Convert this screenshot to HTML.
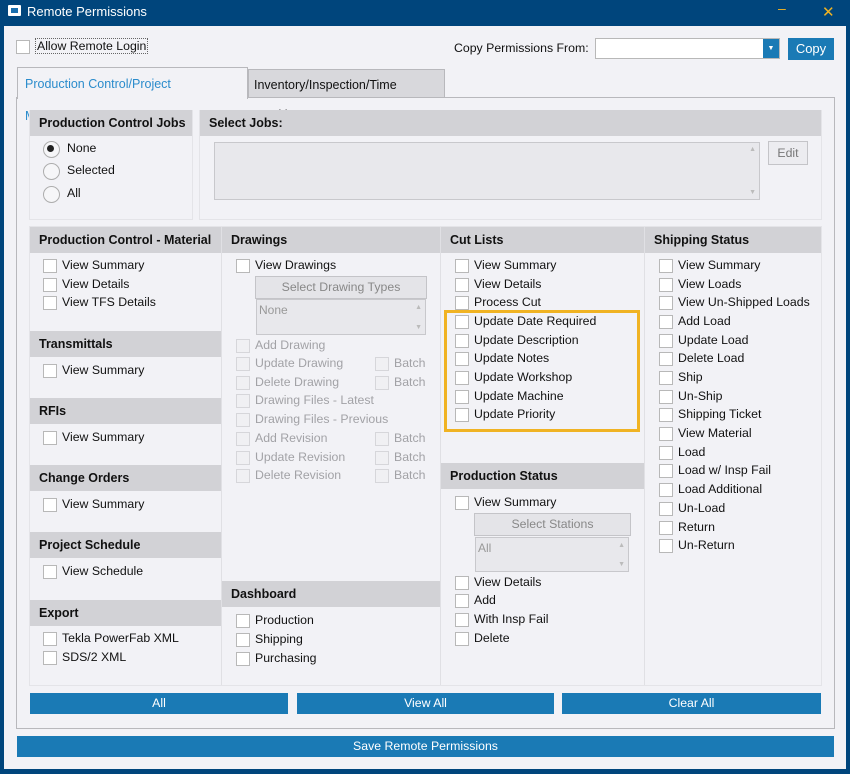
<!DOCTYPE html>
<html><head><meta charset="utf-8"><style>
*{box-sizing:border-box;margin:0;padding:0}
body{width:850px;height:774px;overflow:hidden;background:#00457c;font-family:"Liberation Sans",sans-serif;font-size:12px;color:#111;position:relative}
.a{position:absolute}
#win{left:4px;top:26px;width:842px;height:743px;background:#f2f2f6}
.hd{position:absolute;background:#d2d2d6;font-weight:bold;font-size:12.5px;line-height:26px;padding-left:9px;height:26px;color:#111}
.grp{position:absolute;background:#f2f2f6;border:1px solid #e4e4e8}
.c{position:absolute;height:16px;line-height:15px;padding-left:19px;white-space:nowrap;font-size:12.3px}
.c::before{content:"";position:absolute;left:0;top:1px;width:14px;height:14px;background:#fff;border:1px solid #b8b8b8;box-sizing:border-box}
.d{color:#a2a2a6}
.d::before{background:#f0f0f3;border-color:#d6d6da}
.r{position:absolute;height:16px;line-height:15px;padding-left:24px;font-size:12.3px}
.r::before{content:"";position:absolute;left:0;top:0;width:15px;height:15px;border:1px solid #adadad;border-radius:50%;background:#f6f6f8}
.btn{position:absolute;background:#1a7ab5;color:#fff;text-align:center;font-size:12.3px;line-height:21px;height:21px}
.gb{position:absolute;background:#e4e4e8;border:1px solid #c4c4c8;color:#888;text-align:center;font-size:12.3px}
.lb{position:absolute;background:#e8e8ec;border:1px solid #c8c8cc;color:#999;font-size:12px;padding:3px 2px}
.sc{position:absolute;right:3px;font-size:7px;color:#bbb}
</style></head><body>
<div class="a" style="left:8px;top:5px;width:13px;height:11px;background:#fff;border-radius:1px"></div>
<div class="a" style="left:11px;top:8px;width:7px;height:5px;background:#1a6fae"></div>
<div class="a" style="left:27px;top:4px;color:#fff;font-size:13px">Remote Permissions</div>
<div class="a" style="left:778px;top:0px;color:#f0b323;font-size:14px">–</div>
<div class="a" style="left:822px;top:3px;color:#f0b323;font-size:15px">✕</div>
<div id="win" class="a"></div>

<div class="c" style="left:16px;top:39px;padding-left:20px"><span style="outline:1px dotted #666;padding:0 1px">Allow Remote Login</span></div>
<div class="a" style="left:454px;top:41px;font-size:12.3px">Copy Permissions From:</div>
<div class="a" style="left:595px;top:38px;width:185px;height:21px;background:#fff;border:1px solid #b8b8b8"></div>
<div class="a" style="left:763px;top:39px;width:16px;height:19px;background:#1a7ab5;color:#fff;font-size:7px;text-align:center;line-height:19px">▼</div>
<div class="btn" style="left:788px;top:38px;width:46px;height:22px;line-height:22px;font-size:13px">Copy</div>

<div class="a" style="left:16px;top:97px;width:819px;height:632px;border:1px solid #b8b8bc;background:#f2f2f6"></div>
<div class="a" style="left:17px;top:67px;width:231px;height:32px;border:1px solid #b8b8bc;border-bottom:none;background:#f2f2f6;color:#2b8ccc;font-size:12.5px;line-height:32px;padding-left:7px">Production Control/Project Management</div>
<div class="a" style="left:248px;top:69px;width:197px;height:28px;border:1px solid #b8b8bc;border-bottom:none;background:#d8d8dc;font-size:12.5px;line-height:30px;padding-left:5px">Inventory/Inspection/Time Tracking</div>

<div class="grp" style="left:29px;top:110px;width:164px;height:110px"></div>
<div class="hd" style="left:30px;top:110px;width:162px">Production Control Jobs</div>
<div class="r" style="left:43px;top:141px"><span class="a" style="left:4px;top:4px;width:7px;height:7px;border-radius:50%;background:#222"></span>None</div>
<div class="r" style="left:43px;top:163px">Selected</div>
<div class="r" style="left:43px;top:186px">All</div>

<div class="grp" style="left:199px;top:110px;width:623px;height:110px"></div>
<div class="hd" style="left:200px;top:110px;width:621px">Select Jobs:</div>
<div class="lb" style="left:214px;top:142px;width:546px;height:58px"><span class="sc" style="top:3px">▲</span><span class="sc" style="bottom:3px">▼</span></div>
<div class="gb" style="left:768px;top:141px;width:40px;height:24px;line-height:22px;background:#ececf0;color:#777">Edit</div>

<div class="grp" style="left:29px;top:226px;width:793px;height:460px"></div>
<div class="a" style="left:221px;top:227px;width:1px;height:458px;background:#e0e0e4"></div>
<div class="a" style="left:440px;top:227px;width:1px;height:458px;background:#e0e0e4"></div>
<div class="a" style="left:644px;top:227px;width:1px;height:458px;background:#e0e0e4"></div>

<div class="hd" style="left:30px;top:227px;width:191px">Production Control - Material</div>
<div class="c" style="left:43px;top:258px">View Summary</div>
<div class="c" style="left:43px;top:277px">View Details</div>
<div class="c" style="left:43px;top:295px">View TFS Details</div>
<div class="hd" style="left:30px;top:331px;width:191px">Transmittals</div>
<div class="c" style="left:43px;top:363px">View Summary</div>
<div class="hd" style="left:30px;top:398px;width:191px">RFIs</div>
<div class="c" style="left:43px;top:430px">View Summary</div>
<div class="hd" style="left:30px;top:465px;width:191px">Change Orders</div>
<div class="c" style="left:43px;top:497px">View Summary</div>
<div class="hd" style="left:30px;top:532px;width:191px">Project Schedule</div>
<div class="c" style="left:43px;top:564px">View Schedule</div>
<div class="hd" style="left:30px;top:600px;width:191px">Export</div>
<div class="c" style="left:43px;top:631px">Tekla PowerFab XML</div>
<div class="c" style="left:43px;top:650px">SDS/2 XML</div>

<div class="hd" style="left:222px;top:227px;width:218px">Drawings</div>
<div class="c" style="left:236px;top:258px">View Drawings</div>
<div class="gb" style="left:255px;top:276px;width:172px;height:23px;line-height:21px">Select Drawing Types</div>
<div class="lb" style="left:256px;top:299px;width:170px;height:36px">None<span class="sc" style="top:4px">▲</span><span class="sc" style="bottom:3px">▼</span></div>
<div class="c d" style="left:236px;top:338px">Add Drawing</div>
<div class="c d" style="left:236px;top:356px">Update Drawing</div><div class="c d" style="left:375px;top:356px">Batch</div>
<div class="c d" style="left:236px;top:375px">Delete Drawing</div><div class="c d" style="left:375px;top:375px">Batch</div>
<div class="c d" style="left:236px;top:393px">Drawing Files - Latest</div>
<div class="c d" style="left:236px;top:412px">Drawing Files - Previous</div>
<div class="c d" style="left:236px;top:431px">Add Revision</div><div class="c d" style="left:375px;top:431px">Batch</div>
<div class="c d" style="left:236px;top:450px">Update Revision</div><div class="c d" style="left:375px;top:450px">Batch</div>
<div class="c d" style="left:236px;top:468px">Delete Revision</div><div class="c d" style="left:375px;top:468px">Batch</div>
<div class="hd" style="left:222px;top:581px;width:218px">Dashboard</div>
<div class="c" style="left:236px;top:613px">Production</div>
<div class="c" style="left:236px;top:632px">Shipping</div>
<div class="c" style="left:236px;top:651px">Purchasing</div>

<div class="hd" style="left:441px;top:227px;width:203px">Cut Lists</div>
<div class="c" style="left:455px;top:258px">View Summary</div>
<div class="c" style="left:455px;top:277px">View Details</div>
<div class="c" style="left:455px;top:295px">Process Cut</div>
<div class="c" style="left:455px;top:314px">Update Date Required</div>
<div class="c" style="left:455px;top:333px">Update Description</div>
<div class="c" style="left:455px;top:351px">Update Notes</div>
<div class="c" style="left:455px;top:370px">Update Workshop</div>
<div class="c" style="left:455px;top:389px">Update Machine</div>
<div class="c" style="left:455px;top:407px">Update Priority</div>
<div class="a" style="left:444px;top:310px;width:196px;height:122px;border:3px solid #f0b323"></div>
<div class="hd" style="left:441px;top:463px;width:203px">Production Status</div>
<div class="c" style="left:455px;top:495px">View Summary</div>
<div class="gb" style="left:474px;top:513px;width:157px;height:23px;line-height:21px">Select Stations</div>
<div class="lb" style="left:475px;top:537px;width:154px;height:35px">All<span class="sc" style="top:4px">▲</span><span class="sc" style="bottom:3px">▼</span></div>
<div class="c" style="left:455px;top:575px">View Details</div>
<div class="c" style="left:455px;top:593px">Add</div>
<div class="c" style="left:455px;top:612px">With Insp Fail</div>
<div class="c" style="left:455px;top:631px">Delete</div>

<div class="hd" style="left:645px;top:227px;width:176px">Shipping Status</div>
<div class="c" style="left:659px;top:258px">View Summary</div>
<div class="c" style="left:659px;top:277px">View Loads</div>
<div class="c" style="left:659px;top:295px">View Un-Shipped Loads</div>
<div class="c" style="left:659px;top:314px">Add Load</div>
<div class="c" style="left:659px;top:333px">Update Load</div>
<div class="c" style="left:659px;top:351px">Delete Load</div>
<div class="c" style="left:659px;top:370px">Ship</div>
<div class="c" style="left:659px;top:389px">Un-Ship</div>
<div class="c" style="left:659px;top:407px">Shipping Ticket</div>
<div class="c" style="left:659px;top:426px">View Material</div>
<div class="c" style="left:659px;top:445px">Load</div>
<div class="c" style="left:659px;top:463px">Load w/ Insp Fail</div>
<div class="c" style="left:659px;top:482px">Load Additional</div>
<div class="c" style="left:659px;top:501px">Un-Load</div>
<div class="c" style="left:659px;top:520px">Return</div>
<div class="c" style="left:659px;top:538px">Un-Return</div>

<div class="btn" style="left:30px;top:693px;width:258px">All</div>
<div class="btn" style="left:297px;top:693px;width:257px">View All</div>
<div class="btn" style="left:562px;top:693px;width:259px">Clear All</div>
<div class="btn" style="left:17px;top:736px;width:817px">Save Remote Permissions</div>
</body></html>
